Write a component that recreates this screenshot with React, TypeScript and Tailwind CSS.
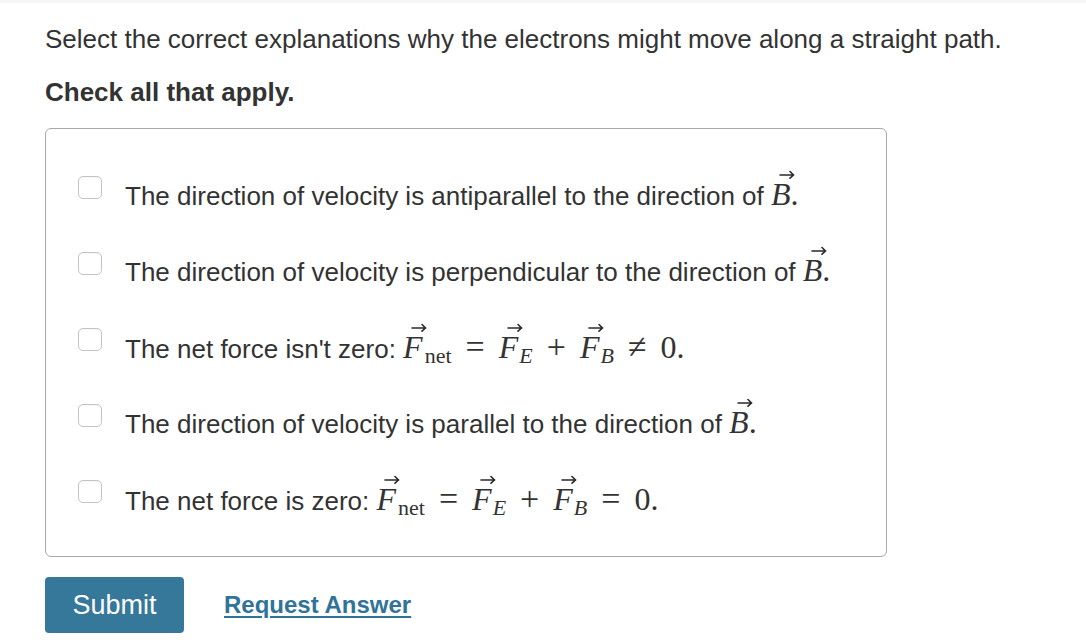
import * as React from 'react';

const serif = { fontFamily: '"Liberation Serif", "DejaVu Serif", serif' };

// Vector symbol: italic serif letter with a small arrow over it.
function Vec({ letter, sub, subItalic = true }: { letter: string; sub?: string; subItalic?: boolean }) {
  return (
    <span className="inline-block">
      <span className="relative inline-block italic" style={serif}>
        <span className="text-[32px] leading-none">{letter}</span>
        <svg
          className="absolute left-[8px] top-[-8px]"
          width="16"
          height="9"
          viewBox="0 0 16 9"
          fill="none"
          stroke="#2a2a2a"
          strokeWidth="1.6"
          strokeLinecap="round"
        >
          <path d="M1 5 H14.5 M11 1.5 L14.5 5 L11 8.2" />
        </svg>
      </span>
      {sub && (
        <span
          className={`relative top-[5px] text-[22px] leading-none ${subItalic ? 'ml-[1px] italic' : 'ml-[2px]'}`}
          style={serif}
        >
          {sub}
        </span>
      )}
    </span>
  );
}

function Op({ children }: { children: React.ReactNode }) {
  return (
    <span className="mx-[14px] inline-block text-[34px] leading-none" style={serif}>
      {children}
    </span>
  );
}

function Num({ children }: { children: React.ReactNode }) {
  return (
    <span className="text-[32px] leading-none" style={serif}>
      {children}
    </span>
  );
}

const options: React.ReactNode[] = [
  <>
    The direction of velocity is antiparallel to the direction of <Vec letter="B" />
    <Num>.</Num>
  </>,
  <>
    The direction of velocity is perpendicular to the direction of <Vec letter="B" />
    <Num>.</Num>
  </>,
  <>
    The net force isn't zero: <Vec letter="F" sub="net" subItalic={false} />
    <Op>=</Op>
    <Vec letter="F" sub="E" />
    <Op>+</Op>
    <Vec letter="F" sub="B" />
    <Op>≠</Op>
    <Num>0.</Num>
  </>,
  <>
    The direction of velocity is parallel to the direction of <Vec letter="B" />
    <Num>.</Num>
  </>,
  <>
    The net force is zero: <Vec letter="F" sub="net" subItalic={false} />
    <Op>=</Op>
    <Vec letter="F" sub="E" />
    <Op>+</Op>
    <Vec letter="F" sub="B" />
    <Op>=</Op>
    <Num>0.</Num>
  </>,
];

export default function App() {
  return (
    <div
      className="h-[644px] w-[1086px] overflow-hidden bg-white text-[#333]"
      style={{ fontFamily: '"Liberation Sans", Arial, sans-serif' }}
    >
      <div className="h-[3px] bg-[#f6f6f6]" />
      <div className="px-[45px] pt-[21px]">
        <p className="text-[26px] leading-[30px]">
          Select the correct explanations why the electrons might move along a straight path.
        </p>
        <p className="mt-[23px] text-[26px] font-bold leading-[30px]">Check all that apply.</p>

        <div className="mt-[21px] flex h-[429px] w-[842px] flex-col rounded-[6px] border border-[#a9a9a9] pt-[47px]">
          {options.map((opt, i) => (
            <label key={i} className="flex h-[76px] shrink-0 items-start">
              <span className="ml-[32px] h-[23px] w-[24px] shrink-0 rounded-[5px] border border-[#c4c4c4] bg-white shadow-[inset_0_1px_1px_rgba(0,0,0,0.04)]" />
              <span className="ml-[23px] mt-[2px] block h-[30px] whitespace-nowrap text-[26px] leading-[30px]">
                {opt}
              </span>
            </label>
          ))}
        </div>

        <div className="mt-[20px] flex items-center">
          <button className="h-[56px] w-[139px] rounded-[4px] bg-[#35789a] text-[27px] text-white">
            Submit
          </button>
          <a
            className="ml-[40px] text-[24px] font-bold text-[#2f7399] underline decoration-[2px] underline-offset-[3px]"
            href="#"
          >
            Request Answer
          </a>
        </div>
      </div>
    </div>
  );
}
